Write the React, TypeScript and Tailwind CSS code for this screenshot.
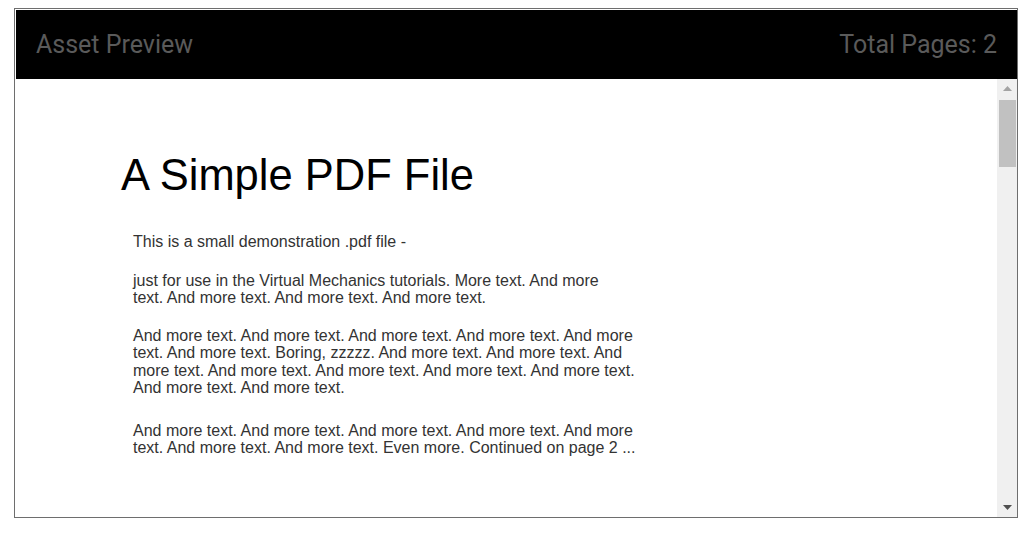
import React from "react";

export default function App() {
  return (
    <div className="w-[1035px] h-[536px] bg-white pt-[8px] pl-[14px]">
      <div className="w-[1004px] h-[510px] border border-[#6e6e6e] pt-px pl-px flex flex-col">
        <header
          className="h-[69px] bg-black flex items-center justify-between px-5 text-[25px] text-[#5a5a5a] shrink-0"
          style={{ fontFamily: "Roboto, 'Liberation Sans', sans-serif" }}
        >
          <span>Asset Preview</span>
          <span>Total Pages: 2</span>
        </header>
        <div className="flex flex-1 min-h-0">
          <div
            className="flex-1 bg-white overflow-hidden pt-[75px] pl-[105px]"
            style={{ fontFamily: "'Liberation Sans', Arial, sans-serif" }}
          >
            <h1 className="text-[43.5px] leading-none text-black whitespace-nowrap">A Simple PDF File</h1>
            <div className="ml-[12px] text-[16px] leading-[17.2px] text-[#333] whitespace-nowrap">
              <p className="mt-[35px]">This is a small demonstration .pdf file -</p>
              <p className="mt-[22px]">
                just for use in the Virtual Mechanics tutorials. More text. And more
                <br />
                text. And more text. And more text. And more text.
              </p>
              <p className="mt-[21px]">
                And more text. And more text. And more text. And more text. And more
                <br />
                text. And more text. Boring, zzzzz. And more text. And more text. And
                <br />
                more text. And more text. And more text. And more text. And more text.
                <br />
                And more text. And more text.
              </p>
              <p className="mt-[26px]">
                And more text. And more text. And more text. And more text. And more
                <br />
                text. And more text. And more text. Even more. Continued on page 2 ...
              </p>
            </div>
          </div>
          <div className="w-[20px] bg-[#f0f0f0] flex flex-col shrink-0">
            <div className="h-[19px] flex items-center justify-center">
              <svg width="9" height="5" viewBox="0 0 9 5">
                <polygon points="0,5 4.5,0 9,5" fill="#a3a3a3" />
              </svg>
            </div>
            <div className="mt-[2px] h-[67px] pl-[2px] pr-[1px]">
              <div className="h-full bg-[#c1c1c1]" />
            </div>
            <div className="flex-1" />
            <div className="h-[19px] flex items-center justify-center">
              <svg width="9" height="5" viewBox="0 0 9 5">
                <polygon points="0,0 9,0 4.5,5" fill="#505050" />
              </svg>
            </div>
          </div>
        </div>
      </div>
    </div>
  );
}
